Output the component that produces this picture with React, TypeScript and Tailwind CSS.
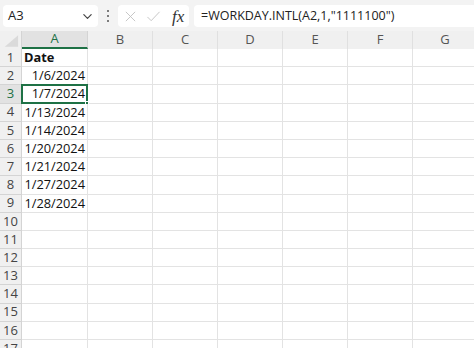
import React from "react";

const COLS = ["A", "B", "C", "D", "E", "F", "G"];

// cell contents keyed by row number (column A only)
const DATA: Record<number, { text: string; bold?: boolean }> = {
  1: { text: "Date", bold: true },
  2: { text: "1/6/2024" },
  3: { text: "1/7/2024" },
  4: { text: "1/13/2024" },
  5: { text: "1/14/2024" },
  6: { text: "1/20/2024" },
  7: { text: "1/21/2024" },
  8: { text: "1/27/2024" },
  9: { text: "1/28/2024" },
};

const ROWS = Array.from({ length: 17 }, (_, i) => i + 1);
const ACTIVE_ROW = 3;

function FormulaBar() {
  return (
    <div className="flex h-[31px] items-center gap-[4px] bg-[#f3f3f3] pl-[3px] pt-[1px]">
      <div className="flex h-[22px] w-[95px] items-center justify-between rounded-[4px] bg-white pl-[5px] pr-[5px]">
        <span className="text-[13px] text-[#222]">A3</span>
        <svg viewBox="0 0 12 12" className="h-[11px] w-[11px]">
          <path d="M2 4l4 4 4-4" fill="none" stroke="#444" strokeWidth="1.3" strokeLinecap="round" strokeLinejoin="round" />
        </svg>
      </div>
      <div className="flex w-[12px] flex-col items-center gap-[3px]">
        <span className="h-[2px] w-[2px] rounded-full bg-[#555]" />
        <span className="h-[2px] w-[2px] rounded-full bg-[#555]" />
        <span className="h-[2px] w-[2px] rounded-full bg-[#555]" />
      </div>
      <div className="flex h-[22px] w-[71px] items-center gap-[9px] rounded-[4px] bg-white pl-[6px]">
        <svg viewBox="0 0 14 14" className="h-[13px] w-[13px]">
          <path d="M2 2l10 10M12 2L2 12" stroke="#c2c2c2" strokeWidth="1" />
        </svg>
        <svg viewBox="0 0 16 14" className="h-[13px] w-[15px]">
          <path d="M1.5 7.5l4 4L14.5 2" fill="none" stroke="#c2c2c2" strokeWidth="1" />
        </svg>
        <span className="ml-[2px] font-['Liberation_Serif',serif] text-[17px] italic leading-none text-[#333]">
          fx
        </span>
      </div>
      <div className="ml-[1px] flex h-[22px] flex-1 items-center rounded-l-[4px] bg-white pl-[7px]">
        <span className="text-[12.5px] text-[#222]">=WORKDAY.INTL(A2,1,"1111100")</span>
      </div>
    </div>
  );
}

function ColumnHeaders() {
  return (
    <div className="flex h-[18px] bg-[#f0f0f0]">
      <div className="relative w-[22px] shrink-0 border-r border-[#d4d4d4]">
        <svg viewBox="0 0 22 18" className="absolute inset-0 h-full w-full">
          <path d="M19 4V16H5Z" fill="#dadada" />
        </svg>
      </div>
      {COLS.map((c) => (
        <div
          key={c}
          className={`flex w-[65px] shrink-0 items-center justify-center border-r text-[13px] ${
            c === "A"
              ? "w-[66px] border-[#d4d4d4] border-b-2 border-b-[#1e7145] bg-[#e2e2e2] text-[#1e7145]"
              : "border-[#e0e0e0] text-[#555]"
          }`}
        >
          {c}
        </div>
      ))}
    </div>
  );
}

function Row({ n }: { n: number }) {
  const cell = DATA[n];
  const active = n === ACTIVE_ROW;
  return (
    <div className="flex h-[18.2px]">
      <div
        className={`flex w-[22px] shrink-0 items-center justify-center border-r border-b border-[#d4d4d4] text-[13px] ${
          active ? "bg-[#e2e2e2] text-[#1e7145]" : "bg-[#f0f0f0] text-[#444]"
        }`}
      >
        {n}
      </div>
      <div
        className={`relative flex w-[66px] shrink-0 items-center border-r border-b border-[#e3e3e3] text-[12.8px] text-[#111] ${
          cell?.bold ? "justify-start pl-[2px] font-bold" : "justify-end pr-[2px]"
        }`}
      >
        {cell?.text}
        {active && (
          <div className="pointer-events-none absolute inset-[-1px] border-2 border-[#1e7145]">
            <span className="absolute bottom-[-3px] right-[-3px] h-[4px] w-[4px] border border-white bg-[#1e7145]" />
          </div>
        )}
      </div>
      {COLS.slice(1).map((c) => (
        <div key={c} className="w-[65px] shrink-0 border-r border-b border-[#e3e3e3]" />
      ))}
    </div>
  );
}

export default function App() {
  return (
    <div className="h-[348px] w-[474px] overflow-hidden bg-white font-['Open_Sans','Noto_Sans',sans-serif]">
      <FormulaBar />
      <ColumnHeaders />
      {ROWS.map((n) => (
        <Row key={n} n={n} />
      ))}
    </div>
  );
}
